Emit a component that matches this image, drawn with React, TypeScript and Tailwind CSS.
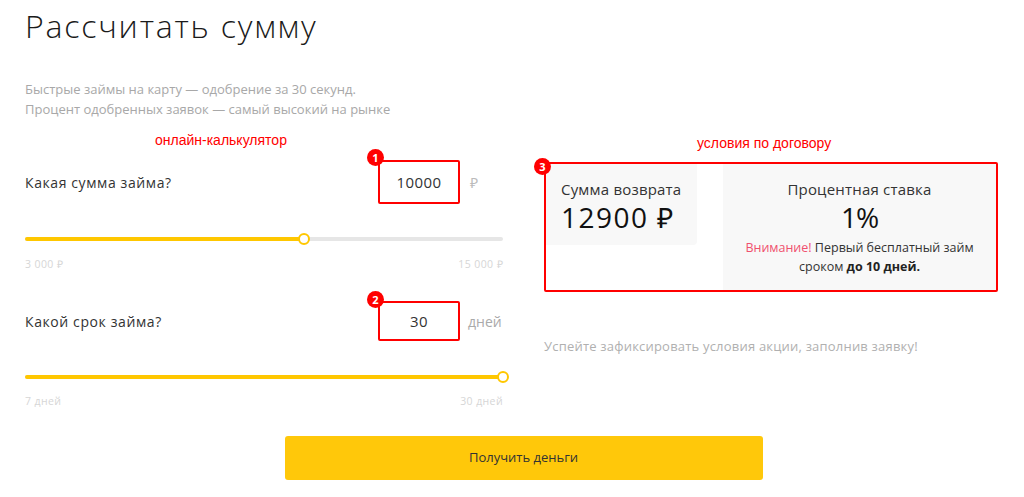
import React, { useState } from 'react';

// Small red numbered marker that sits on the corner of an annotated block
const Badge: React.FC<{ n: number; className: string }> = ({ n, className }) => (
  <span
    className={`absolute flex h-[17px] w-[17px] items-center justify-center rounded-full bg-[#f00] text-[11px] font-bold leading-none tracking-normal text-white ${className}`}
  >
    {n}
  </span>
);

interface SliderProps {
  min: number;
  max: number;
  value: number;
  minLabel: string;
  maxLabel: string;
  labelsGap: string;
}

const Slider: React.FC<SliderProps> = ({ min, max, value, minLabel, maxLabel, labelsGap }) => {
  const pct = ((value - min) / (max - min)) * 100;
  return (
    <div>
      <div className="relative flex h-[12px] items-center">
        <div className="h-[4px] w-full rounded-full bg-[#e6e6e6]">
          <div className="h-full rounded-full bg-[#ffc700]" style={{ width: `${pct}%` }} />
        </div>
        <div
          className="absolute top-0 h-[12px] w-[12px] rounded-full border-2 border-[#ffc700] bg-white"
          style={{ left: `calc(${pct}% - 6px)` }}
        />
      </div>
      <div className={`${labelsGap} flex justify-between text-[10.5px] leading-[14px] tracking-[0.4px] text-[#d6d6d6]`}>
        <span>{minLabel}</span>
        <span>{maxLabel}</span>
      </div>
    </div>
  );
};

const App: React.FC = () => {
  const [amount] = useState(10000);
  const [days] = useState(30);

  return (
    <div className="h-[497px] w-[1024px] overflow-hidden bg-white font-['Open_Sans',sans-serif] text-[#222]">
      <div className="ml-[25px] w-[997px] pt-[6px]">
        <h1 className="text-[32px] font-light leading-[40px] tracking-[1.8px] text-[#1a1a1a]">Рассчитать сумму</h1>

        <div className="mt-[33px] text-[13px] leading-[20px] text-[#a8a8a8]">
          <p>Быстрые займы на карту — одобрение за 30 секунд.</p>
          <p>Процент одобренных заявок — самый высокий на рынке</p>
        </div>

        <div className="mt-[11px] flex items-start">
          {/* calculator */}
          <div className="w-[478px]">
            <div className="pl-[130px] font-['Liberation_Sans',Arial,sans-serif] text-[14px] leading-[20px] text-[#f00]">
              онлайн-калькулятор
            </div>

            <div className="mt-[10px] flex items-center">
              <span className="flex-1 text-[14px] tracking-[0.6px] text-[#333]">Какая сумма займа?</span>
              <div className="relative flex h-[44px] w-[82px] items-center justify-center rounded-[2px] border-2 border-[#f00] text-[15px] tracking-[0.4px] text-[#333]">
                {amount}
                <Badge n={1} className="-left-[13px] -top-[13px]" />
              </div>
              <span className="w-[43px] pl-[10px] text-[14px] text-[#bbb]">₽</span>
            </div>

            <div className="mt-[29px]">
              <Slider min={3000} max={15000} value={amount} minLabel="3 000 ₽" maxLabel="15 000 ₽" labelsGap="mt-[12px]" />
            </div>

            <div className="mt-[30px] flex items-center">
              <span className="flex-1 text-[14px] tracking-[0.6px] text-[#333]">Какой срок займа?</span>
              <div className="relative flex h-[40px] w-[82px] items-center justify-center rounded-[2px] border-2 border-[#f00] text-[15px] tracking-[0.4px] text-[#333]">
                {days}
                <Badge n={2} className="-left-[13px] -top-[12px]" />
              </div>
              <span className="w-[43px] pl-[8px] text-[14px] text-[#aaa]">дней</span>
            </div>

            <div className="mt-[30px]">
              <Slider min={7} max={30} value={days} minLabel="7 дней" maxLabel="30 дней" labelsGap="mt-[11px]" />
            </div>
          </div>

          {/* contract terms */}
          <div className="ml-[41px] w-[454px] pt-[3px]">
            <div className="pl-[153px] font-['Liberation_Sans',Arial,sans-serif] text-[14px] leading-[20px] text-[#f00]">
              условия по договору
            </div>

            <div className="relative mt-[9px] flex h-[130px] rounded-[2px] border-2 border-[#f00]">
              <div className="h-[81px] w-[151px] rounded-br-[4px] bg-[#f8f8f8] pl-[15px] pt-[15px]">
                <div className="text-[15px] leading-[20px] tracking-[0.2px] text-[#333]">Сумма возврата</div>
                <div className="mt-[2px] text-[28px] leading-[32px] tracking-[1.5px] text-[#111]">12900 ₽</div>
              </div>
              <div className="ml-[26px] flex-1 bg-[#f8f8f8] pt-[15px] text-center">
                <div className="text-[15px] leading-[20px] tracking-[0.2px] text-[#333]">Процентная ставка</div>
                <div className="mt-[2px] text-[28px] leading-[32px] tracking-[-1px] text-[#111]">1%</div>
                <div className="mt-[5px] text-[12.5px] leading-[19px] text-[#333]">
                  <div>
                    <span className="text-[#f0506e]">Внимание!</span> Первый бесплатный займ
                  </div>
                  <div>
                    сроком <b className="font-bold text-[#222]">до 10 дней.</b>
                  </div>
                </div>
              </div>
              <Badge n={3} className="-left-[12px] -top-[6px]" />
            </div>

            <p className="mt-[44px] text-[13px] leading-[20px] tracking-[0.2px] text-[#b0b0b0]">
              Успейте зафиксировать условия акции, заполнив заявку!
            </p>
          </div>
        </div>

        <div className="mt-[28px] flex justify-center">
          <button className="h-[44px] w-[478px] rounded-[3px] bg-[#ffc80a] text-[13px] text-[#333]">
            Получить деньги
          </button>
        </div>
      </div>
    </div>
  );
};

export default App;
